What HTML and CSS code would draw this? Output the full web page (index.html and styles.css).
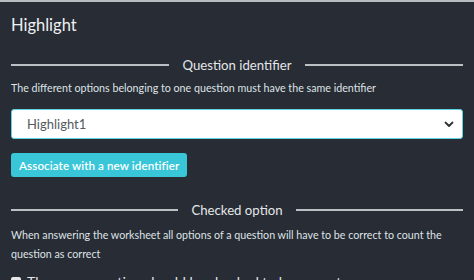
FILE: index.html
```html
<!DOCTYPE html>
<html>
<head>
<meta charset="utf-8">
<link rel="stylesheet" href="styles.css">
</head>
<body>
<div class="topbar"></div>
<div class="panel">
  <h1 class="title">Highlight</h1>
  <div class="sep"><span class="line"></span><span class="sep-text">Question identifier</span><span class="line"></span></div>
  <p class="desc">The different options belonging to one question must have the same identifier</p>
  <div class="select">
    <span class="select-value">Highlight1</span>
    <svg class="chev" width="10" height="7" viewBox="0 0 10 7"><path d="M1.5 1.5 L5 5 L8.5 1.5" fill="none" stroke="#333" stroke-width="1.8" stroke-linecap="round" stroke-linejoin="round"/></svg>
  </div>
  <button class="btn">Associate with a new identifier</button>
  <div class="sep sep2"><span class="line"></span><span class="sep-text">Checked option</span><span class="line"></span></div>
  <p class="desc para">When answering the worksheet all options of a question will have to be correct to count the question as correct</p>
  <label class="check"><span class="box"></span><span>The answer option should be checked to be correct</span></label>
</div>
</body>
</html>
```
FILE: styles.css
```css
html, body {
  margin: 0;
  padding: 0;
  background: #272c35;
  height: 100%;
  overflow: hidden;
}
body {
  font-family: "Lato", "Noto Sans", sans-serif;
  color: #e4e6e8;
}
.topbar {
  height: 2px;
  background: #b9bdc2;
}
.panel {
  padding: 0 11px;
}
.title {
  margin: 0;
  padding-top: 13px;
  font-size: 16.5px;
  font-weight: 400;
  line-height: 20px;
  color: #eef0f2;
}
.sep {
  display: flex;
  align-items: center;
  gap: 13px;
  margin-top: 20px;
  height: 20px;
}
.line {
  flex: 1;
  height: 2px;
  background: #bcc0c5;
}
.sep-text {
  font-size: 13.2px;
  color: #e4e6e8;
}
.desc {
  margin: 3px 0 0;
  font-size: 10.7px;
  line-height: 19px;
  color: #dfe2e5;
}
.select {
  margin-top: 12px;
  box-sizing: border-box;
  height: 30px;
  background: #ffffff;
  border: 1px solid #5fd3df;
  border-radius: 3px;
  display: flex;
  align-items: center;
  justify-content: space-between;
  padding: 0 8px 0 15px;
}
.select-value {
  font-size: 13px;
  color: #555a60;
}
.btn {
  display: block;
  margin-top: 14px;
  height: 24px;
  padding: 0 8px;
  border: none;
  border-radius: 3px;
  background: #39c6d8;
  color: #ffffff;
  font-family: inherit;
  font-size: 11.6px;
  font-weight: 600;
  letter-spacing: 0.1px;
}
.sep2 {
  margin-top: 23px;
}
.para {
  margin-top: 5px;
}
.check {
  display: flex;
  align-items: center;
  gap: 6px;
  margin-top: 10px;
  font-size: 14px;
}
.box {
  width: 10px;
  height: 10px;
  background: #e8e8e8;
  border-radius: 2px;
}
```
